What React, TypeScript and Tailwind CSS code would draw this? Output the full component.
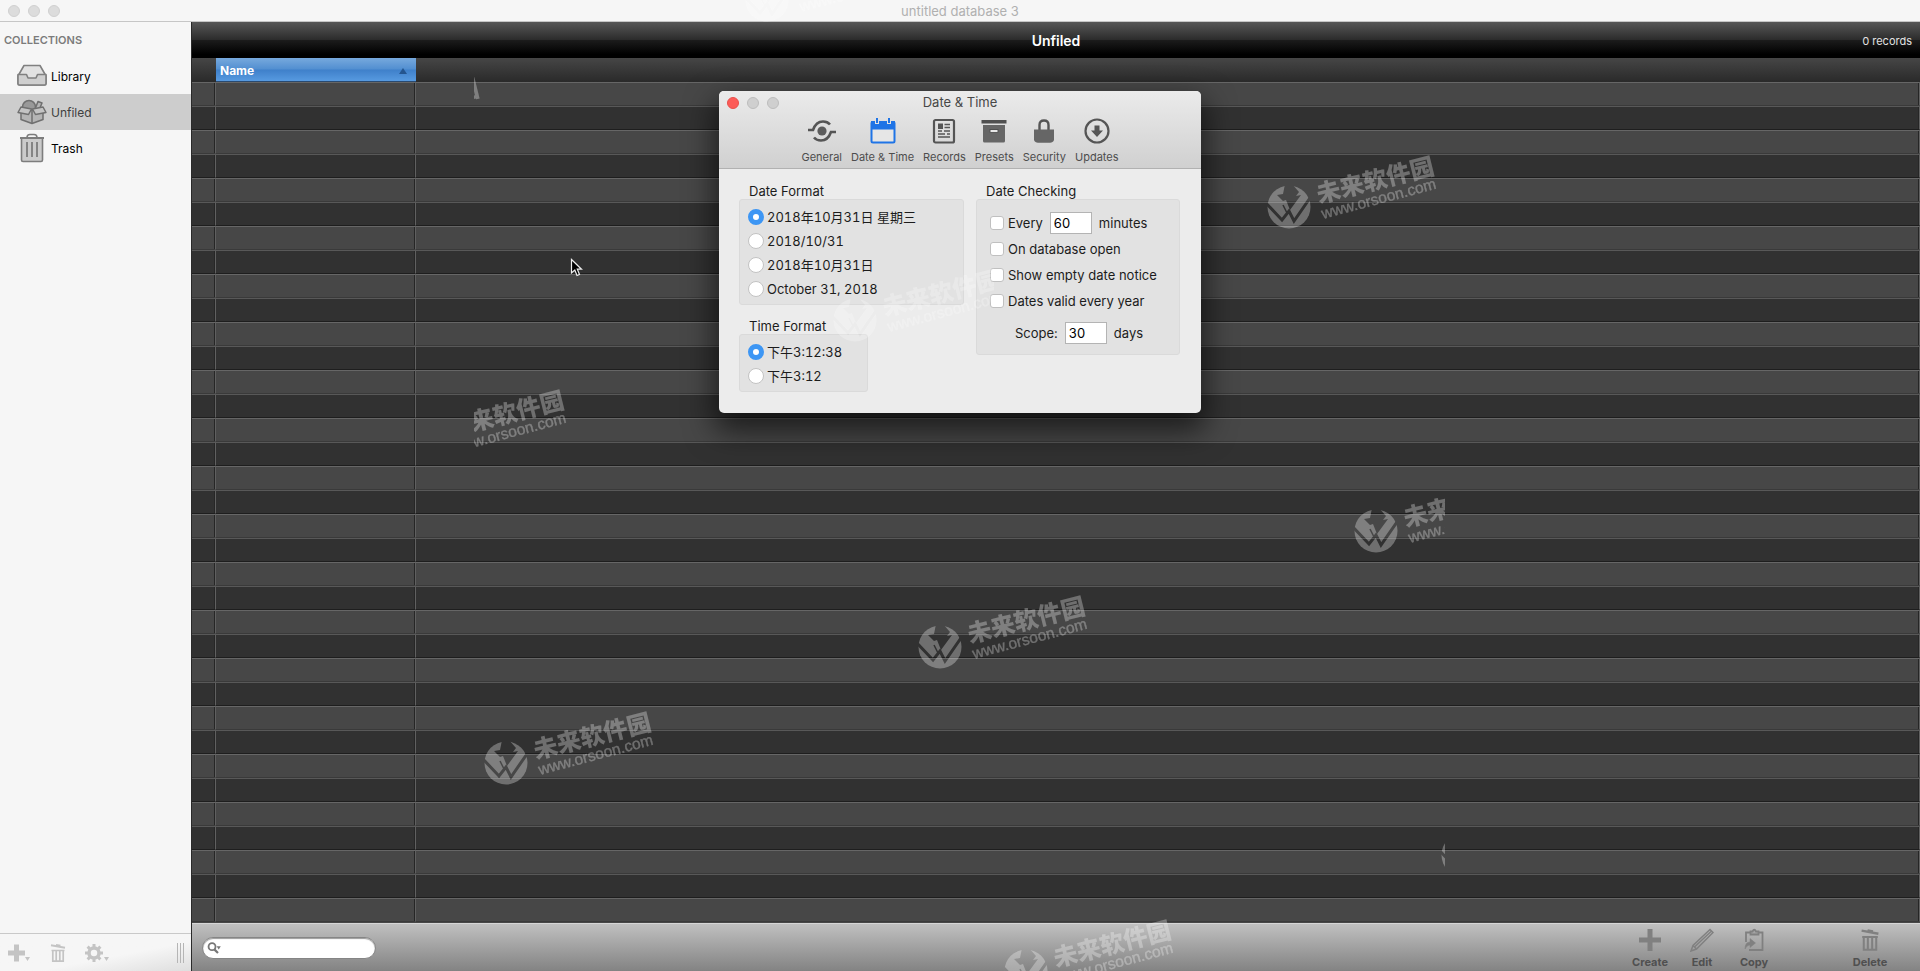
import { useId, useState, type ReactNode } from "react";

type MarkProps = { className: string; x: number; y: number };

function Watermark({ className, x, y }: MarkProps) {
  const id = useId();
  return (
    <div aria-hidden="true" className={`pointer-events-none absolute overflow-hidden ${className}`}>
      <svg width="190" height="100" className="block" overflow="visible">
        <g transform={`translate(${x} ${y})`} fill="#fff">
          <mask id={id} maskUnits="userSpaceOnUse" x="-24" y="-24" width="48" height="48">
            <circle r="21.500" fill="#fff" />
            <path d="M-4-23L-6-13L-12-12L-6-6L-3-7L1 3L12-12L7-11L10-15L3-23Z" fill="#000" />
            <path d="M-24-5L-7 13L0 4L5 14L23-12" fill="none" stroke="#000" strokeWidth="3" />
            <path d="M-6-2L-2 6" fill="none" stroke="#000" strokeWidth="1.500" />
          </mask>
          <rect x="-24" y="-24" width="48" height="48" mask={`url(#${id})`} />
          <text transform="translate(30 -4) rotate(-14)" fontFamily="'Noto Sans CJK SC', sans-serif" fontWeight="900" fontSize="24">未来软件园</text>
          <text transform="translate(34 12) rotate(-15)" fontFamily="'Liberation Sans', sans-serif" fontSize="15.500" stroke="#fff" strokeWidth="0.300">www.orsoon.com</text>
        </g>
      </svg>
    </div>
  );
}

const LibraryIcon = () => (
  <svg width="30" height="30" viewBox="0 0 30 30" fill="#e2e2e2" stroke="#808080" strokeWidth="1.600" strokeLinejoin="round">
    <path d="M1 15L7 4.500H23L29 15V22.500Q29 24 27.500 24H2.500Q1 24 1 22.500Z" />
    <path d="M1 13.500H9.500L11 17H19L20.500 13.500H29V22.500Q29 24 27.500 24H2.500Q1 24 1 22.500Z" fill="#cfcfcf" />
  </svg>
);

const BoxIcon = () => (
  <svg width="30" height="30" viewBox="0 0 30 30" fill="#b5b5b5" stroke="#707070" strokeWidth="1.500" strokeLinejoin="round">
    <circle cx="12" cy="10" r="6.500" fill="#999" />
    <path d="M18.500 11L21 4.500L25 6L22.500 12" />
    <path d="M4 11L15 13L26 11V22.500L15 26.500L4 22.500Z" />
    <path d="M15 13V26" />
    <path d="M4 10L14.500 12L11.500 17.500L1 15.500Z M26 10L15.500 12L18.500 17.500L29 15.500Z" fill="#c4c4c4" />
  </svg>
);

const TrashIcon = () => (
  <svg width="30" height="30" viewBox="0 0 30 30" fill="#d5d5d5" stroke="#7d7d7d" strokeWidth="1.600" strokeLinejoin="round">
    <path d="M10 4.500Q10 1.500 13 1.500H17Q20 1.500 20 4.500" fill="none" />
    <path d="M4.500 5H25.500V27Q25.500 28.500 24 28.500H6Q4.500 28.500 4.500 27Z" fill="#cbcbcb" />
    <path d="M3 5H27" strokeWidth="2" />
    <path d="M10 9V24M15 9V24M20 9V24" strokeWidth="1.800" />
  </svg>
);

const SmallTrash = ({ size = 20 }: { size?: number }) => (
  <svg width={size} height={size} viewBox="0 0 20 20" fill="none" stroke="currentColor" strokeWidth="1.700">
    <path d="M3.500 7.500H16.500M4.800 8V18.200H15.200V8M8.200 8V18M11.800 8V18" />
    <path d="M3 2.200L17 4.800M8 2L12.500 2.800" strokeWidth="2" />
  </svg>
);

const Caret = () => (
  <svg width="5" height="4" viewBox="0 0 5 4" fill="currentColor"><path d="M0 0H5L2.500 4Z" /></svg>
);

const toolTabs: { name: string; icon: ReactNode }[] = [
  {
    name: "General",
    icon: (
      <svg width="28" height="26" viewBox="0 0 28 26" fill="none" stroke="#555" strokeWidth="2.600">
        <circle cx="14" cy="13" r="4.600" fill="#5c5c5c" stroke="none" />
        <path d="M0 12H5Q8 3.500 15 3.500Q19.500 3.500 22 6.500" />
        <path d="M28 14H23Q20 22.500 13 22.500Q8.500 22.500 6 19.500" />
      </svg>
    ),
  },
  {
    name: "Date & Time",
    icon: (
      <svg width="26" height="26" viewBox="0 0 26 26" fill="none" stroke="#1f74e6">
        <rect x="1.500" y="4" width="23" height="20.500" rx="1.500" fill="#e6e6e6" strokeWidth="2" />
        <path d="M1 3H25V11.500H1Z" fill="#1f74e6" stroke="none" />
        <path d="M7 0V6M19 0V6" stroke="#e2e2e2" strokeWidth="4" />
        <path d="M7 0V5M19 0V5" strokeWidth="2" />
      </svg>
    ),
  },
  {
    name: "Records",
    icon: (
      <svg width="24" height="26" viewBox="0 0 24 26" fill="none" stroke="#555">
        <rect x="2" y="2" width="20" height="22.500" rx="1.500" strokeWidth="2.200" />
        <rect x="6" y="5.500" width="5" height="5.500" fill="#555" stroke="none" />
        <path d="M12.500 6.500H18M12.500 9.500H18M6 13H10M12 13H18M6 16H13M15 16H18M6 19H18" strokeWidth="1.500" />
      </svg>
    ),
  },
  {
    name: "Presets",
    icon: (
      <svg width="26" height="26" viewBox="0 0 26 26" fill="#666">
        <rect x="0.500" y="2" width="25" height="3.500" fill="#505050" />
        <path d="M2 7H24V23Q24 24.500 22.500 24.500H3.500Q2 24.500 2 23Z" />
        <rect x="8.500" y="11" width="9" height="3.500" fill="#505050" />
        <rect x="9.500" y="12" width="7" height="2" fill="#e8e8e8" />
      </svg>
    ),
  },
  {
    name: "Security",
    icon: (
      <svg width="22" height="26" viewBox="0 0 22 26" fill="#666">
        <path d="M6.500 12V7Q6.500 2.500 11 2.500Q15.500 2.500 15.500 7V12" fill="none" stroke="#555" strokeWidth="2.400" />
        <path d="M1 11.500H21V22Q20 24.800 17 24.800H5Q2 24.800 1 22Z" />
      </svg>
    ),
  },
  {
    name: "Updates",
    icon: (
      <svg width="26" height="26" viewBox="0 0 26 26" fill="#555">
        <circle cx="13" cy="13" r="11.500" fill="none" stroke="#555" strokeWidth="2.200" />
        <path d="M10.500 7.500H15.500V12.500H19L13 19L7 12.500H10.500Z" />
      </svg>
    ),
  },
];

const radioClass =
  "size-4 shrink-0 appearance-none rounded-full border border-[#c2c2c2] bg-white checked:border-[5px] checked:border-[#3d96f4]";
const checkClass =
  "size-[14px] shrink-0 appearance-none rounded-[3px] border border-[#c0c0c0] bg-white checked:bg-[#3d96f4]";
const numberClass = "h-[22px] w-[42px] border border-[#b4b4b4] bg-white px-[3px] text-[13px] text-black outline-none";
const groupClass = "rounded-[3px] border border-[#dadada] bg-[#e2e2e2]";

function RadioGroup({ title, name, options, width }: { title: string; name: string; options: string[]; width: string }) {
  const [value, setValue] = useState(options[0]);
  return (
    <fieldset>
      <legend className="h-4 pl-[10px] leading-4">{title}</legend>
      <div className={`${groupClass} ${width} pt-[5px] pb-[3px] pl-2`}>
        {options.map((option) => (
          <label key={option} className="flex h-6 items-center gap-[3px] whitespace-nowrap tabular-nums">
            <input type="radio" name={name} className={radioClass} checked={value === option} onChange={() => setValue(option)} />
            <span className="pt-px">{option}</span>
          </label>
        ))}
      </div>
    </fieldset>
  );
}

function Preferences() {
  return (
    <section
      role="dialog"
      aria-label="Date & Time"
      className="absolute top-[91px] left-1/2 w-[482px] -translate-x-1/2 overflow-hidden rounded-[5px] bg-[#ececec] text-[13px] text-[#1c1c1c] shadow-[0_14px_30px_4px_rgba(0,0,0,0.6)]"
    >
      <header className="flex flex-col border-b border-[#b1b1b1] bg-linear-to-b from-[#ebebeb] to-[#d0d0d0] pb-[3px]">
        <div className="grid h-[23px] grid-cols-[1fr_auto_1fr] items-center px-2">
          <div className="flex gap-2">
            <button aria-label="Close" className="size-3 rounded-full border border-[#e8504b] bg-[#fc5b57]" />
            <button aria-label="Minimize" className="size-3 rounded-full border border-[#bdbdbd] bg-[#cfcfcf]" />
            <button aria-label="Zoom" className="size-3 rounded-full border border-[#bdbdbd] bg-[#cfcfcf]" />
          </div>
          <h2 className="text-[#474747]">Date &amp; Time</h2>
        </div>
        <nav className="flex justify-center gap-[9px] pt-1">
          {toolTabs.map((tab) => (
            <button key={tab.name} className="flex flex-col items-center gap-[5px] text-[11px] leading-4 text-[#4d4d4d]">
              {tab.icon}
              {tab.name}
            </button>
          ))}
        </nav>
      </header>
      <div className="flex items-start gap-3 px-5 pt-[14px] pb-[21px]">
        <div className="flex flex-col gap-[13px]">
          <RadioGroup title="Date Format" name="date" width="w-[225px]" options={["2018年10月31日 星期三", "2018/10/31", "2018年10月31日", "October 31, 2018"]} />
          <RadioGroup title="Time Format" name="time" width="w-[129px]" options={["下午3:12:38", "下午3:12"]} />
        </div>
        <fieldset>
          <legend className="h-4 pl-[10px] leading-4">Date Checking</legend>
          <div className={`${groupClass} w-[204px] pt-[10px] pb-2 pl-[13px]`}>
            <div className="flex h-[26px] items-center gap-[7px]">
              <label className="flex items-center gap-1"><input type="checkbox" className={checkClass} /><span className="pt-px">Every</span></label>
              <input aria-label="Interval in minutes" className={numberClass} defaultValue="60" />
              <span className="pt-px">minutes</span>
            </div>
            {["On database open", "Show empty date notice", "Dates valid every year"].map((text) => (
              <label key={text} className="flex h-[26px] items-center gap-1 whitespace-nowrap">
                <input type="checkbox" className={checkClass} /><span className="pt-px">{text}</span>
              </label>
            ))}
            <div className="mt-[6px] flex h-[26px] items-center gap-[7px] pl-[25px]">
              <label htmlFor="scope" className="pt-px">Scope:</label>
              <input id="scope" className={numberClass} defaultValue="30" />
              <span className="pt-px">days</span>
            </div>
          </div>
        </fieldset>
      </div>
    </section>
  );
}

const collections = [
  { name: "Library", icon: <LibraryIcon /> },
  { name: "Unfiled", icon: <BoxIcon /> },
  { name: "Trash", icon: <TrashIcon /> },
];

function Sidebar() {
  return (
    <aside className="flex w-48 shrink-0 flex-col border-r border-[#2a2a2a] bg-[#f6f6f6] text-xs">
      <h2 className="h-9 pl-1 text-[11px] leading-9 font-semibold text-[#7b7b7b]">COLLECTIONS</h2>
      {collections.map((item) => (
        <button
          key={item.name}
          className={
            item.name === "Unfiled"
              ? "flex h-9 items-center gap-1 bg-[#cdcdcd] pl-[17px] text-[#404040]"
              : "flex h-9 items-center gap-1 pl-[17px] text-black"
          }
        >
          {item.icon}
          <span className="pt-px">{item.name}</span>
        </button>
      ))}
      <div className="mt-auto flex h-[38px] items-center border-t border-[#c9c9c9] bg-linear-to-br from-[#f6f6f6] from-60% to-[#dedede] pl-2 text-[#c4c4c4]">
        <button aria-label="Add" className="flex w-10 items-center">
          <svg width="17" height="18" viewBox="0 0 17 18" fill="currentColor"><path d="M6 0.500H11V6.500H17V11.500H11V17.500H6V11.500H0V6.500H6Z" /></svg>
          <span className="pt-3"><Caret /></span>
        </button>
        <button aria-label="Remove" className="w-9"><SmallTrash /></button>
        <button aria-label="Actions" className="flex items-center">
          <svg width="20" height="20" viewBox="0 0 20 20" fill="none" stroke="currentColor">
            <circle cx="10" cy="10" r="5" strokeWidth="3.500" />
            <path d="M10 1V4M10 16V19M1 10H4M16 10H19M3.600 3.600L6 6M14 14L16.400 16.400M3.600 16.400L6 14M14 6L16.400 3.600" strokeWidth="3" />
          </svg>
          <span className="pt-3"><Caret /></span>
        </button>
        <div className="mr-[7px] ml-auto flex h-5 gap-[2px]">
          <i className="w-px bg-[#b5b5b5]" /><i className="w-px bg-[#b5b5b5]" /><i className="w-px bg-[#b5b5b5]" />
        </div>
      </div>
    </aside>
  );
}

const actions: { name: string; icon: ReactNode; className: string }[] = [
  { name: "Create", className: "", icon: <svg width="24" height="24" viewBox="0 0 24 24" fill="currentColor"><path d="M9.500 1H14.500V9.500H23V14.500H14.500V23H9.500V14.500H1V9.500H9.500Z" /></svg> },
  { name: "Edit", className: "", icon: <svg width="24" height="24" viewBox="0 0 24 24" fill="none" stroke="currentColor" strokeWidth="1.500"><path d="M1 23L3 17.500L20 1.500L23 4.500L6.500 21L1 23ZM3 17.500L6.500 21M5 18.500L21 3.500" /></svg> },
  { name: "Copy", className: "", icon: <svg width="24" height="24" viewBox="0 0 24 24" fill="none" stroke="currentColor" strokeWidth="1.800"><path d="M4 14V4.500H20.500V22H7" /><path d="M8.500 6.500V3.500H10.500Q12.300 0 14 3.500H16.500V6.500Z" fill="#a5a5a5" /><path d="M3 21Q3 14 8 14V10.500L13.500 15L8 19.500V17Q5 17 3 21Z" fill="currentColor" strokeWidth="0.500" /></svg> },
  { name: "Delete", className: "ml-16", icon: <SmallTrash size={24} /> },
];

const rows = Array.from({ length: 35 }, (_, index) => index);
const darkCell = "border-t border-b border-t-[#585858] border-b-[#1e1e1e] bg-[#313131]";
const lightCell = "border-t border-b border-t-[#666666] border-b-[#3a3a3a] bg-[#474747]";

export default function App() {
  return (
    <div className="relative flex min-h-screen flex-col overflow-hidden bg-[#474747] font-['Inter','Noto_Sans_CJK_SC',sans-serif]">
      <header className="grid h-[22px] grid-cols-[1fr_auto_1fr] items-center border-b border-[#c6c6c6] bg-[#f6f6f6] px-2">
        <div className="flex gap-2">
          <button aria-label="Close window" className="size-3 rounded-full border border-[#d0d0d0] bg-[#dcdcdc]" />
          <button aria-label="Minimize window" className="size-3 rounded-full border border-[#d0d0d0] bg-[#dcdcdc]" />
          <button aria-label="Zoom window" className="size-3 rounded-full border border-[#d0d0d0] bg-[#dcdcdc]" />
        </div>
        <h1 className="pt-px text-[13px] leading-4 text-[#b0b0b0]">untitled database 3</h1>
      </header>
      <div className="flex flex-1">
        <Sidebar />
        <main className="flex min-w-0 flex-1 flex-col">
          <div className="grid h-9 grid-cols-[1fr_auto_1fr] items-center bg-[linear-gradient(#575757,#2b2b2b_50%,#1c1c1c_50%,#000_90%)] text-white">
            <span />
            <h2 className="pt-[2px] text-sm font-semibold">Unfiled</h2>
            <span className="pt-[2px] pr-2 text-right text-[11px] text-[#e2e2e2] tabular-nums">0 records</span>
          </div>
          <table className="w-full table-fixed border-separate border-spacing-0">
            <colgroup>
              <col className="w-6" />
              <col className="w-[200px]" />
              <col />
            </colgroup>
            <thead>
              <tr className="h-6">
                <td className="bg-linear-to-b from-[#464646] to-[#2a2a2a] p-0" />
                <th className="border-b border-[#2a4a70] bg-[linear-gradient(#77a9dd,#528fd1_48%,#3f80ca_52%,#579ae0)] px-1 pt-[2px] pb-0 text-left text-xs font-bold text-white">
                  <span className="flex items-center justify-between pr-[5px]">
                    Name
                    <svg width="8" height="6" viewBox="0 0 8 6" fill="#24558f"><path d="M4 0L8 6H0Z" /></svg>
                  </span>
                </th>
                <td className="bg-linear-to-b from-[#464646] to-[#2a2a2a] p-0" />
              </tr>
            </thead>
            <tbody>
              {rows.map((row) => {
                const cell = row % 2 ? darkCell : lightCell;
                return (
                  <tr key={row} className="h-6">
                    <td className={`${cell} border-r border-r-[#606060] p-0 shadow-[inset_-1px_0_#262626]`} />
                    <td className={`${cell} border-r border-r-[#606060] p-0 shadow-[inset_-1px_0_#262626]`} />
                    <td className={`${cell} border-r border-r-[#606060] p-0 shadow-[inset_-1px_0_#262626]`} />
                  </tr>
                );
              })}
            </tbody>
          </table>
          <footer className="mt-auto flex h-12 items-center border-t border-[#d6d6d6] bg-linear-to-b from-[#c0c0c0] to-[#838383] pr-6 pl-[10px]">
            <label className="mt-px flex h-[22px] w-[174px] items-center rounded-full border border-[#858585] bg-white px-1 shadow-[inset_0_1px_1px_rgba(0,0,0,0.4)]">
              <svg width="15" height="14" viewBox="0 0 15 14" fill="none" stroke="#777">
                <circle cx="5.500" cy="5.500" r="3.800" strokeWidth="2" />
                <path d="M8 8.500L12 12.500" strokeWidth="2.400" />
                <path d="M10.500 5H15L12.800 8.500Z" fill="#777" stroke="none" />
              </svg>
              <input aria-label="Search" type="search" className="w-full bg-transparent text-xs outline-none" />
            </label>
            <div className="ml-auto flex pt-[2px]">
              {actions.map((action) => (
                <button key={action.name} className={`flex w-[52px] flex-col items-center gap-[2px] text-[#808080] ${action.className}`}>
                  {action.icon}
                  <span className="text-[11px] leading-4 font-bold text-[#505050]">{action.name}</span>
                </button>
              ))}
            </div>
          </footer>
        </main>
      </div>

      <Preferences />

      <Watermark className="top-[142px] left-[1259px] opacity-30" x={30} y={65} />
      <Watermark className="top-[376px] left-[474px] opacity-30" x={-55} y={65} />
      <Watermark className="top-[466px] left-[1346px] w-[99px] opacity-30" x={30} y={65} />
      <Watermark className="top-[582px] left-[910px] opacity-30" x={30} y={65} />
      <Watermark className="top-[698px] left-[476px] opacity-30" x={30} y={65} />
      <Watermark className="bottom-0 left-[996px] h-[65px] opacity-30" x={30} y={65} />
      <Watermark className="top-[255px] left-[825px] w-[169px] opacity-25" x={30} y={65} />
      <Watermark className="top-0 left-[737px] h-[22px] opacity-30" x={30} y={0} />
      <Watermark className="top-[60px] left-[474px] h-[40px] opacity-30" x={-140} y={69} />
      <Watermark className="top-[790px] left-[1433px] w-[12px] opacity-30" x={30} y={65} />

      <svg aria-hidden="true" width="14" height="20" viewBox="0 0 14 20" className="pointer-events-none absolute top-[258px] left-[570px]">
        <path d="M1.500 1.500V15L4.800 12L7 17.500L9.500 16.400L7.300 11.200H11.500Z" fill="#000" stroke="#eee" strokeWidth="1.200" />
      </svg>
    </div>
  );
}
